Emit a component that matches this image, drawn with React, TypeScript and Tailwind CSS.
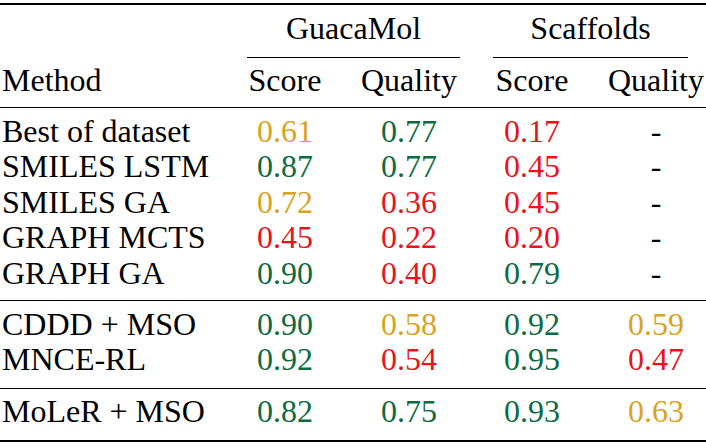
const GOLD = "text-[#d9a322]";
const GREEN = "text-[#0d6b3f]";
const RED = "text-[#e8141b]";

type Cell = { v: string; c?: string };

const g = (v: string): Cell => ({ v, c: GREEN });
const o = (v: string): Cell => ({ v, c: GOLD });
const r = (v: string): Cell => ({ v, c: RED });
const dash: Cell = { v: "-" };

const sections: { name: string; cells: Cell[] }[][] = [
  [
    { name: "Best of dataset", cells: [o("0.61"), g("0.77"), r("0.17"), dash] },
    { name: "SMILES LSTM", cells: [g("0.87"), g("0.77"), r("0.45"), dash] },
    { name: "SMILES GA", cells: [o("0.72"), r("0.36"), r("0.45"), dash] },
    { name: "GRAPH MCTS", cells: [r("0.45"), r("0.22"), r("0.20"), dash] },
    { name: "GRAPH GA", cells: [g("0.90"), r("0.40"), g("0.79"), dash] },
  ],
  [
    { name: "CDDD + MSO", cells: [g("0.90"), o("0.58"), g("0.92"), o("0.59")] },
    { name: "MNCE-RL", cells: [g("0.92"), r("0.54"), g("0.95"), r("0.47")] },
  ],
  [{ name: "MoLeR + MSO", cells: [g("0.82"), g("0.75"), g("0.93"), o("0.63")] }],
];

const grid = "grid grid-cols-[230px_110px_138px_128px_100px]";

function Row({ name, cells }: { name: string; cells: Cell[] }) {
  return (
    <div className={`${grid} h-[35.5px] leading-[35.5px]`}>
      <div className="pl-[2px] whitespace-nowrap">{name}</div>
      {cells.map((cell, i) => (
        <div
          key={i}
          className={`text-center ${i === 2 ? "pr-[20px]" : ""} ${cell.c ?? ""}`}
        >
          {cell.v}
        </div>
      ))}
    </div>
  );
}

export default function App() {
  return (
    <div className="w-[706px] h-[447px] bg-white text-black overflow-hidden font-[family-name:Liberation_Serif,Times_New_Roman,serif] text-[32px]">
      <div className="mt-[3px] border-t-2 border-black">
        {/* group headers with cmidrules */}
        <div className={`${grid} pt-[6px] leading-[35.5px]`}>
          <div />
          <div className="col-span-2">
            <div className="ml-[17px] mr-[18px] border-b border-black pb-[10.5px] text-center">
              GuacaMol
            </div>
          </div>
          <div className="col-span-2">
            <div className="ml-[15px] mr-[18px] border-b border-black pb-[10.5px] text-center">
              Scaffolds
            </div>
          </div>
        </div>
        {/* column headers */}
        <div className={`${grid} pt-[5px] pb-[9.5px] h-[50px] leading-[35.5px] border-b border-black`}>
          <div className="pl-[2px]">Method</div>
          <div className="text-center">Score</div>
          <div className="text-center">Quality</div>
          <div className="text-center pr-[20px]">Score</div>
          <div className="text-center">Quality</div>
        </div>
      </div>

      {sections.map((rows, si) => (
        <div
          key={si}
          className={`pt-[5.5px] ${
            si === sections.length - 1
              ? "pb-[10px] border-b-2"
              : si === 0
                ? "pb-[9px] border-b"
                : "pb-[10px] border-b"
          } border-black`}
        >
          {rows.map((row) => (
            <Row key={row.name} {...row} />
          ))}
        </div>
      ))}
    </div>
  );
}
